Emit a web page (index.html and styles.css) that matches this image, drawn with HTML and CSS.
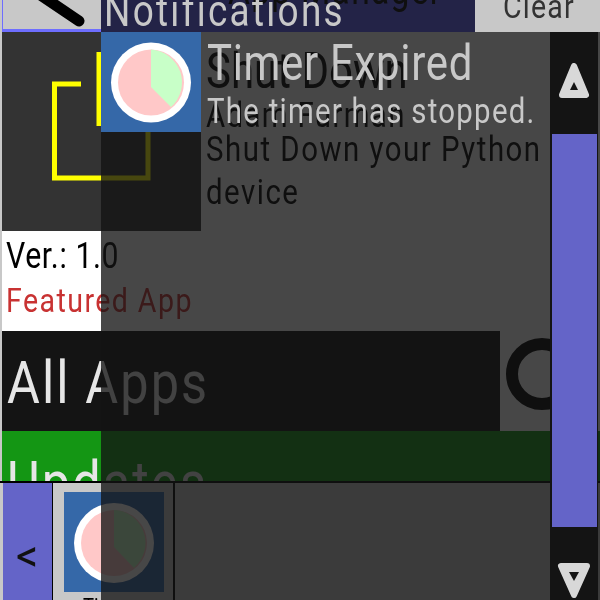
FILE: index.html
```html
<!DOCTYPE html>
<html>
<head>
    <title>App Manager</title>
    <link rel="stylesheet" href="styles.css">
</head>
<body>
    <div class="screen">
        <div class="app">
            <div class="topbar">
                <div class="search-btn">
                    <svg width="99" height="32" viewBox="0 0 99 32"><line x1="36" y1="-6" x2="76" y2="21" class="search-handle"/></svg>
                </div>
                <div class="app-title"><span class="squeeze">App Manager</span></div>
            </div>
            <div class="list">
                <div class="card">
                    <div class="card-top">
                        <div class="card-icon">
                            <svg width="199" height="199" viewBox="0 0 199 199">
                                <path class="power" d="M79 52H52.500V146H146V99M97 20V94"/>
                            </svg>
                        </div>
                        <div class="card-info">
                            <div class="card-name"><span class="squeeze">Shut Down</span></div>
                            <div class="card-author"><span class="squeeze">Adam Furman</span></div>
                            <div class="card-desc"><span class="squeeze">Shut Down your Python<br>device</span></div>
                        </div>
                    </div>
                    <div class="card-ver"><span class="squeeze">Ver.: 1.0</span></div>
                    <div class="card-feat"><span class="squeeze">Featured App</span></div>
                </div>
                <div class="cat cat-all">
                    <div class="cat-label"><span class="squeeze">All Apps</span></div>
                    <div class="cat-icon"><span class="ring"></span></div>
                </div>
                <div class="cat cat-upd">
                    <div class="cat-label"><span class="squeeze">Updates</span></div>
                </div>
            </div>
            <div class="dock">
                <div class="back">&lt;</div>
                <div class="tile">
                    <svg class="timer" width="100" height="100" viewBox="0 0 100 100">
                        <rect width="100" height="100" fill="#3568a8"/>
                        <circle cx="50" cy="51" r="40" fill="#fff"/>
                        <circle cx="50" cy="51" r="33" fill="#ffc8c8"/>
                        <path d="M50 18A33 33 0 0 1 70 76L50 55Z" fill="#c8ffc8"/>
                    </svg>
                    <div class="tile-name"><span class="squeeze">Timer</span></div>
                </div>
            </div>
        </div>

        <div class="dim"></div>

        <div class="drawer">
            <div class="drawer-head">
                <div class="drawer-title"><span class="squeeze">Notifications</span></div>
                <div class="clear"><span class="squeeze">Clear</span></div>
            </div>
            <div class="notice">
                <svg class="timer" width="100" height="100" viewBox="0 0 100 100">
                    <rect width="100" height="100" fill="#3568a8"/>
                    <circle cx="50" cy="50.500" r="40" fill="#fff"/>
                    <circle cx="50" cy="50.500" r="33" fill="#ffc8c8"/>
                    <path d="M50 17.500A33 33 0 0 1 70 75L50 55Z" fill="#c8ffc8"/>
                </svg>
                <div class="notice-text">
                    <div class="notice-title"><span class="squeeze">Timer Expired</span></div>
                    <div class="notice-body"><span class="squeeze">The timer has stopped.</span></div>
                </div>
            </div>
            <div class="scrollbar">
                <div class="arrow arrow-up">
                    <svg width="36" height="40" viewBox="0 0 36 40">
                        <path class="arrow-glyph" d="M18 3L30 32H6Z"/>
                        <path class="arrow-hole" d="M18 19L22 27H14Z"/>
                    </svg>
                </div>
                <div class="thumb"></div>
                <div class="arrow arrow-down">
                    <svg width="36" height="40" viewBox="0 0 36 40">
                        <path class="arrow-glyph" d="M5 4H31L18 33Z"/>
                        <path class="arrow-hole" d="M13 10H23L18 19Z"/>
                    </svg>
                </div>
            </div>
        </div>
    </div>
</body>
</html>
```

FILE: styles.css
```css
html, body {
    margin: 0;
    padding: 0;
    background: #c8c8c8;
}
.screen {
    position: relative;
    width: 600px;
    height: 600px;
    overflow: hidden;
    font-family: Roboto, sans-serif;
    filter: blur(0.6px);
}
.squeeze {
    display: inline-block;
    transform: scaleX(0.84);
    transform-origin: left center;
    white-space: nowrap;
    filter: blur(0.4px);
}

/* app behind the drawer */
.app {
    display: flex;
    flex-direction: column;
    height: 600px;
    padding-left: 2px;
    box-sizing: border-box;
}
.topbar {
    display: flex;
    height: 32px;
    flex: none;
    background: #5b5bff;
}
.search-btn {
    width: 99px;
    box-sizing: border-box;
    height: 32px;
    background: #c8c8c8;
    border-left: 1px solid #6e6eff;
    border-bottom: 3px solid #6e6eff;
    overflow: hidden;
}
.search-handle {
    stroke: #000;
    stroke-width: 11;
    stroke-linecap: round;
}
.app-title {
    flex: 1;
    height: 32px;
    overflow: hidden;
    padding-left: 127px;
    font-size: 40px;
    line-height: 40px;
    letter-spacing: 1.5px;
    color: #000;
}
.app-title .squeeze {
    display: block;
    margin-top: -29px;
}
.list {
    flex: 1;
    min-height: 0;
    overflow: hidden;
}
.card {
    height: 299px;
    background: #fff;
}
.card-top {
    display: flex;
    height: 199px;
}
.card-icon {
    width: 199px;
    height: 199px;
    flex: none;
    background: #333;
    overflow: hidden;
}
.power {
    fill: none;
    stroke: #ff0;
    stroke-width: 5;
}
.card-info {
    padding: 10px 0 0 5px;
    color: #000;
}
.card-name {
    font-size: 50px;
    line-height: 58px;
}
.card-author {
    font-size: 35px;
    line-height: 34px;
    letter-spacing: 1.6px;
    margin-top: -1px;
}
.card-desc {
    font-size: 35px;
    line-height: 43px;
    letter-spacing: 1.8px;
    margin-top: -5px;
}
.card-ver {
    padding-left: 4px;
    margin-top: 2px;
    font-size: 36px;
    line-height: 46px;
    letter-spacing: 0.7px;
    color: #000;
}
.card-feat {
    padding-left: 4px;
    font-size: 34px;
    line-height: 42px;
    letter-spacing: 1.7px;
    color: #c83232;
}
.cat {
    display: flex;
    height: 100px;
}
.cat-label {
    flex: 1;
    padding-left: 5px;
    font-size: 60px;
    line-height: 104px;
    letter-spacing: 2.5px;
    color: #e6e6e6;
}
.cat-all .cat-label {
    background: #141414;
}
.cat-icon {
    width: 100px;
    flex: none;
    background: #fff;
}
.ring {
    display: block;
    width: 72px;
    height: 72px;
    box-sizing: border-box;
    margin: 7px 0 0 6px;
    border: 12px solid #000;
    border-radius: 50%;
}
.cat-upd {
    background: #149614;
}
.dock {
    display: flex;
    height: 119px;
    flex: none;
    box-sizing: border-box;
    margin-left: -2px;
    padding-left: 3px;
    background: #c8c8c8;
    border-top: 2px solid #000;
}
.back {
    width: 49px;
    flex: none;
    overflow: hidden;
    background: #6464c8;
    font-size: 44px;
    line-height: 146px;
    padding-left: 13px;
    box-sizing: border-box;
    color: #111;
}
.tile {
    width: 123px;
    flex: none;
    box-sizing: border-box;
    padding: 9px 0 0 11px;
    background: #c8c8c8;
    border-left: 1px solid #000;
    border-right: 2px solid #000;
    overflow: hidden;
}
.tile .timer {
    display: block;
}
.tile-name {
    margin-top: 4px;
    padding-left: 19px;
    font-size: 22px;
    line-height: 22px;
    color: #000;
}

/* notification drawer on top */
.dim {
    position: absolute;
    left: 101px;
    top: 0;
    right: 0;
    bottom: 0;
    background: rgba(19, 19, 19, 0.78);
}
.drawer {
    position: absolute;
    left: 101px;
    top: 0;
    right: 0;
    bottom: 0;
}
.drawer-head {
    display: flex;
    height: 32px;
}
.drawer-title {
    flex: 1;
    height: 32px;
    overflow: hidden;
    padding-left: 3px;
    font-size: 44px;
    line-height: 44px;
    letter-spacing: 2.7px;
    color: #c8c8c8;
}
.drawer-title .squeeze {
    display: block;
    margin-top: -11px;
}
.clear {
    width: 125px;
    height: 32px;
    flex: none;
    box-sizing: border-box;
    overflow: hidden;
    background: #c8c8c8;
    padding-left: 28px;
    font-size: 34px;
    line-height: 12px;
    letter-spacing: 1.4px;
    color: #333;
}
.notice {
    display: flex;
    height: 100px;
}
.notice .timer {
    flex: none;
}
.notice-text {
    padding-left: 6px;
    color: #c8c8c8;
}
.notice-title {
    font-size: 50px;
    line-height: 58px;
    letter-spacing: 0.8px;
    margin-top: 2px;
}
.notice-body {
    font-size: 35px;
    line-height: 40px;
    letter-spacing: 1.5px;
}
.scrollbar {
    position: absolute;
    right: 2px;
    top: 32px;
    bottom: 0;
    width: 48px;
    display: flex;
    flex-direction: column;
    background: #141414;
}
.arrow {
    display: flex;
    justify-content: center;
    flex: none;
}
.arrow-up {
    height: 102px;
    padding-top: 31px;
    box-sizing: border-box;
}
.arrow-down {
    height: 73px;
    padding-top: 35px;
    box-sizing: border-box;
}
.arrow-glyph {
    fill: #d8d8d8;
    stroke: #d8d8d8;
    stroke-width: 6;
    stroke-linejoin: round;
}
.arrow-hole {
    fill: #141414;
}
.thumb {
    flex: 1;
    margin: 0 1px 0 2px;
    background: #6464c8;
}
```
